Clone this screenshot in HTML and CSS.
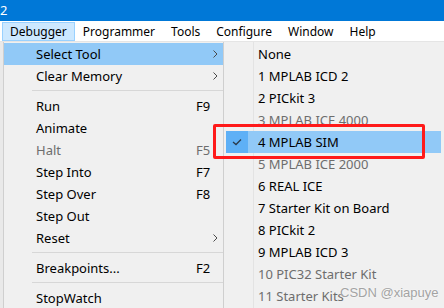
FILE: index.html
```html
<!DOCTYPE html>
<html lang="en">
<head>
  <meta charset="UTF-8">
  <title>Debugger menu</title>
  <link rel="stylesheet" href="styles.css">
</head>
<body>

  <div class="titlebar"><span>2</span></div>

  <div class="menubar">
    <span class="top-item open">Debugger</span>
    <span class="top-item">Programmer</span>
    <span class="top-item">Tools</span>
    <span class="top-item">Configure</span>
    <span class="top-item">Window</span>
    <span class="top-item">Help</span>
  </div>

  <div class="workarea">
    <div class="app-edge"></div>

    <div class="menu main-menu">
      <div class="item hot"><span class="label">Select Tool</span><span class="key"></span><span class="arrow"><svg width="5" height="8" viewBox="0 0 5 8"><path d="M0.5 0.5 L4 4 L0.5 7.5" fill="none" stroke="#4a4a4a" stroke-width="1"/></svg></span></div>
      <div class="item"><span class="label">Clear Memory</span><span class="key"></span><span class="arrow"><svg width="5" height="8" viewBox="0 0 5 8"><path d="M0.5 0.5 L4 4 L0.5 7.5" fill="none" stroke="#4a4a4a" stroke-width="1"/></svg></span></div>
      <div class="sep"></div>
      <div class="item"><span class="label">Run</span><span class="key">F9</span><span class="arrow"></span></div>
      <div class="item"><span class="label">Animate</span><span class="key"></span><span class="arrow"></span></div>
      <div class="item off"><span class="label">Halt</span><span class="key">F5</span><span class="arrow"></span></div>
      <div class="item"><span class="label">Step Into</span><span class="key">F7</span><span class="arrow"></span></div>
      <div class="item"><span class="label">Step Over</span><span class="key">F8</span><span class="arrow"></span></div>
      <div class="item"><span class="label">Step Out</span><span class="key"></span><span class="arrow"></span></div>
      <div class="item"><span class="label">Reset</span><span class="key"></span><span class="arrow"><svg width="5" height="8" viewBox="0 0 5 8"><path d="M0.5 0.5 L4 4 L0.5 7.5" fill="none" stroke="#4a4a4a" stroke-width="1"/></svg></span></div>
      <div class="sep"></div>
      <div class="item"><span class="label">Breakpoints...</span><span class="key">F2</span><span class="arrow"></span></div>
      <div class="sep"></div>
      <div class="item"><span class="label">StopWatch</span><span class="key"></span><span class="arrow"></span></div>
    </div>

    <div class="menu sub-menu">
      <div class="sub-item"><span class="check"></span><span class="label">None</span></div>
      <div class="sub-item"><span class="check"></span><span class="label">1 MPLAB ICD 2</span></div>
      <div class="sub-item"><span class="check"></span><span class="label">2 PICkit 3</span></div>
      <div class="sub-item off"><span class="check"></span><span class="label">3 MPLAB ICE 4000</span></div>
      <div class="sub-item hot"><span class="check"><svg width="10" height="8" viewBox="0 0 10 8"><path d="M1 4 L4 6.5 L9 1.5" fill="none" stroke="#2b3a4a" stroke-width="1.3"/></svg></span><span class="label">4 MPLAB SIM</span></div>
      <div class="sub-item off"><span class="check"></span><span class="label">5 MPLAB ICE 2000</span></div>
      <div class="sub-item"><span class="check"></span><span class="label">6 REAL ICE</span></div>
      <div class="sub-item"><span class="check"></span><span class="label">7 Starter Kit on Board</span></div>
      <div class="sub-item"><span class="check"></span><span class="label">8 PICkit 2</span></div>
      <div class="sub-item"><span class="check"></span><span class="label">9 MPLAB ICD 3</span></div>
      <div class="sub-item off"><span class="check"></span><span class="label">10 PIC32 Starter Kit</span></div>
      <div class="sub-item off"><span class="check"></span><span class="label">11 Starter Kits</span></div>
    </div>
  </div>

  <!-- annotation drawn over the screenshot -->
  <div class="red-box"></div>
  <div class="watermark">CSDN @xiapuye</div>

</body>
</html>
```

FILE: styles.css
```css
html, body {
  margin: 0;
  padding: 0;
}

body {
  width: 444px;
  height: 308px;
  overflow: hidden;
  position: relative;
  font-family: "Noto Sans", "Open Sans", sans-serif;
  font-size: 13px;
  color: #000000;
  background-color: #f0f0f0;
}

.titlebar {
  height: 21px;
  background-color: #0078d7;
  color: #ffffff;
  line-height: 21px;
  font-size: 13px;
}

.menubar {
  height: 20px;
  background-color: #ffffff;
  display: flex;
  align-items: center;
  padding-left: 2px;
  border-bottom: 1px solid #e5e5e5;
  font-size: 12px;
}

.top-item {
  padding: 0 7px;
  height: 17px;
  line-height: 17px;
  border: 1px solid transparent;
}

.top-item.open {
  background-color: #cce8ff;
  border-color: #99d1ff;
}

.workarea {
  display: flex;
  height: 266px;
}

.app-edge {
  width: 3px;
  background-color: #e9e9e9;
}

.menu {
  background-color: #f0f0f0;
  padding-top: 1px;
}

.main-menu {
  width: 219px;
  border-left: 1px solid #cfcfcf;
}

.item {
  height: 22px;
  display: grid;
  grid-template-columns: 32px 1fr 17px 10px;
  align-items: center;
}

.item .label {
  grid-column: 2;
}

.item .key {
  grid-column: 3;
}

.item .arrow {
  grid-column: 4;
  display: flex;
  align-items: center;
}

.item.hot {
  background-color: #91c9f7;
}

.off {
  color: #6d6d6d;
}

.sep {
  height: 8px;
  margin-left: 28px;
  background: linear-gradient(#f0f0f0 3px, #d7d7d7 3px, #d7d7d7 4px, #f0f0f0 4px);
}

.sub-menu {
  flex: 1;
  border-left: 1px solid #cfcfcf;
  background: linear-gradient(to right, #f0f0f0 29px, #e3e3e3 29px, #e3e3e3 30px, #f0f0f0 30px);
}

.sub-item {
  height: 22px;
  display: flex;
  align-items: center;
  margin: 0 3px 0 2px;
}

.sub-item .check {
  width: 22px;
  height: 22px;
  display: flex;
  align-items: center;
  justify-content: center;
}

.sub-item .label {
  padding-left: 10px;
}

.sub-item.hot {
  background-color: #91c9f7;
}

.sub-item.hot .check {
  background-color: #5eb0f6;
}

.red-box {
  position: absolute;
  left: 213px;
  top: 124px;
  width: 206px;
  height: 29px;
  border: 3px solid #ff1a1a;
  border-radius: 2px;
}

.watermark {
  position: absolute;
  left: 340px;
  top: 285px;
  font-family: "Liberation Sans", Arial, sans-serif;
  font-size: 13px;
  color: #a3a3a3;
  text-shadow: 0 0 2px #ffffff;
}
```
